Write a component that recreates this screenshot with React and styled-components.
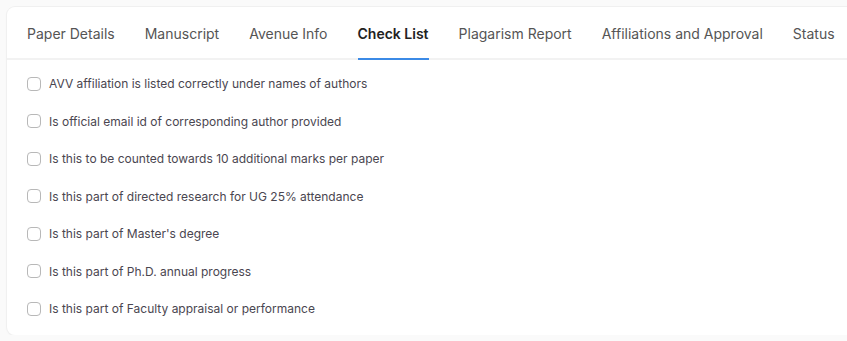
import { useState } from 'react';
import styled, { createGlobalStyle } from 'styled-components';

const GlobalStyle = createGlobalStyle`
  body {
    margin: 0;
    background: #fafafa;
    font-family: Inter, "Noto Sans", sans-serif;
    overflow: hidden;
  }
`;

const tabs = [
  'Paper Details',
  'Manuscript',
  'Avenue Info',
  'Check List',
  'Plagarism Report',
  'Affiliations and Approval',
  'Status',
];

const items = [
  'AVV affiliation is listed correctly under names of authors',
  'Is official email id of corresponding author provided',
  'Is this to be counted towards 10 additional marks per paper',
  'Is this part of directed research for UG 25% attendance',
  "Is this part of Master's degree",
  'Is this part of Ph.D. annual progress',
  'Is this part of Faculty appraisal or performance',
];

const App = () => {
  const [active, setActive] = useState('Check List');
  const [checked, setChecked] = useState({});

  return (
    <>
      <GlobalStyle />
      <Card>
        <TabBar>
          {tabs.map((t) => (
            <Tab key={t} $active={t === active} onClick={() => setActive(t)}>
              {t}
            </Tab>
          ))}
        </TabBar>
        <List>
          {items.map((label, i) => (
            <Row key={label}>
              <Box
                type="checkbox"
                checked={!!checked[i]}
                onChange={() => setChecked({ ...checked, [i]: !checked[i] })}
              />
              <span>{label}</span>
            </Row>
          ))}
        </List>
      </Card>
    </>
  );
};

const Card = styled.div`
  margin: 7px 0 0 7px;
  width: 900px;
  background: #fff;
  border-radius: 8px;
  box-shadow: 0 0 0 1px #f0f0f0, 0 1px 3px rgba(0, 0, 0, 0.04);
  padding-bottom: 7px;
`;

const TabBar = styled.div`
  display: flex;
  gap: 30px;
  padding: 0 20px;
  border-bottom: 2px solid #f2f2f2;
`;

const Tab = styled.button`
  appearance: none;
  background: none;
  border: none;
  padding: 16px 0 13px;
  margin-bottom: -2px;
  border-bottom: 2px solid ${(p) => (p.$active ? '#3b8ae6' : 'transparent')};
  font-family: inherit;
  font-size: 14px;
  line-height: 22px;
  font-weight: ${(p) => (p.$active ? 600 : 400)};
  color: ${(p) => (p.$active ? '#222' : '#555')};
  cursor: pointer;
  white-space: nowrap;
`;

const List = styled.div`
  display: flex;
  flex-direction: column;
  padding: 5px 20px 0;
`;

const Row = styled.label`
  display: flex;
  align-items: center;
  gap: 8px;
  height: 37.5px;
  font-size: 12px;
  color: #4a4650;
  cursor: pointer;
`;

const Box = styled.input`
  appearance: none;
  margin: 0;
  width: 14px;
  height: 14px;
  border: 1px solid #b8b8b8;
  border-radius: 4px;
  background: #fff;
  cursor: pointer;

  &:checked {
    background: #3b8ae6;
    border-color: #3b8ae6;
  }
`;

export default App;
